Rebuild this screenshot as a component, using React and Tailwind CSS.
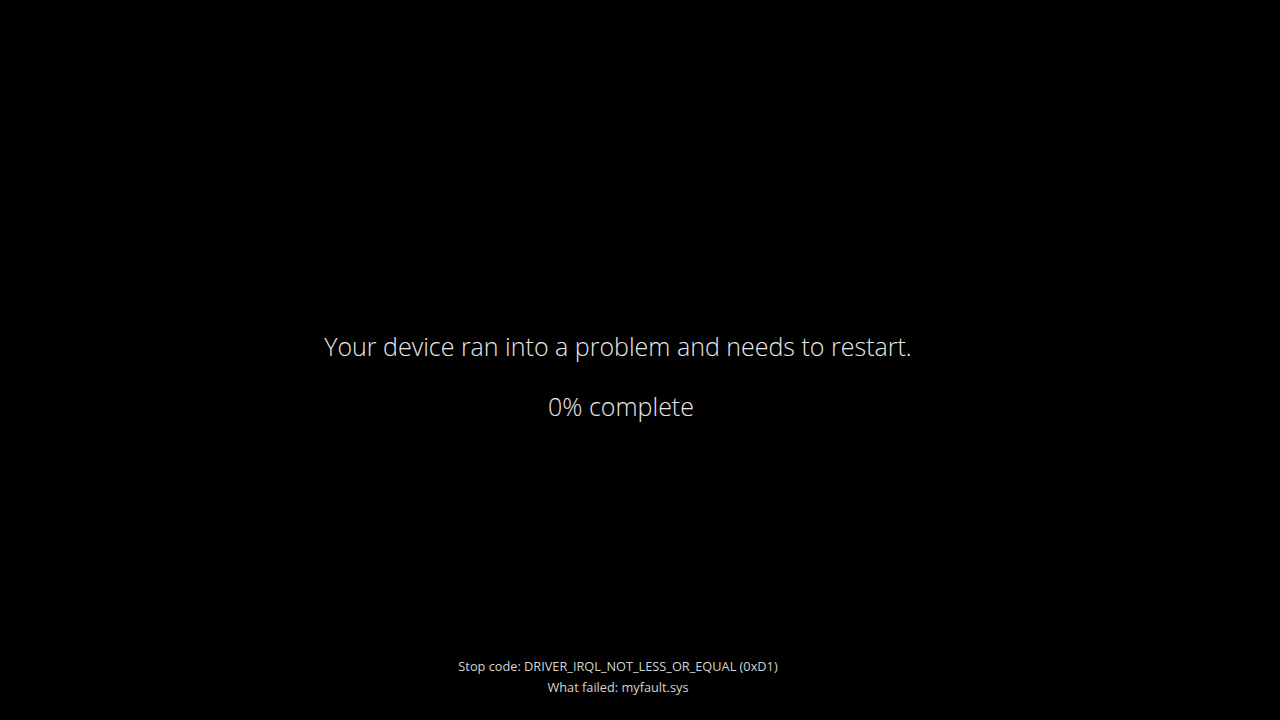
// Stop screen: centered restart message with stop code footer
export default function App() {
  return (
    <div
      className="flex h-[720px] w-[1280px] flex-col items-center bg-black pr-[44px] text-[#e8e8e8]"
      style={{ fontFamily: '"Open Sans", "Noto Sans", sans-serif' }}
    >
      <div className="mt-[328px] text-[25px] font-light leading-[36px]">
        Your device ran into a problem and needs to restart.
      </div>
      <div className="mt-[24px] ml-[6px] text-[25px] font-light leading-[36px]">0% complete</div>
      <div className="mt-auto mb-[22px] flex flex-col items-center text-[12.75px] leading-[21px] text-[#d4d4d4]">
        <div>Stop code: DRIVER_IRQL_NOT_LESS_OR_EQUAL (0xD1)</div>
        <div>What failed: myfault.sys</div>
      </div>
    </div>
  );
}
